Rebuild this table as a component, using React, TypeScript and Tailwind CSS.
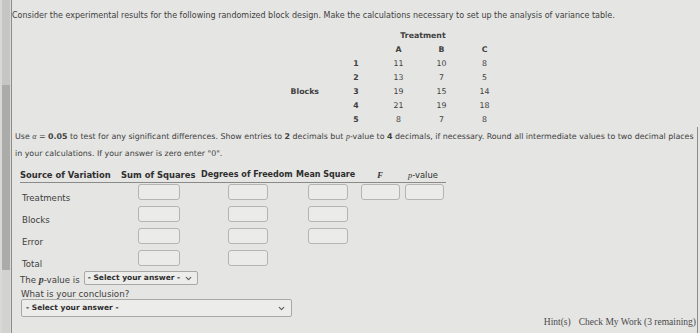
import React from 'react';
import { ChevronDown } from 'lucide-react';

// Treatment data per block
const rows = [
  { block: 1, a: 11, b: 10, c: 8 },
  { block: 2, a: 13, b: 7, c: 5 },
  { block: 3, a: 19, b: 15, c: 14 },
  { block: 4, a: 21, b: 19, c: 18 },
  { block: 5, a: 8, b: 7, c: 8 },
];

const Box = ({ w }: { w: string }) => (
  <div className={`${w} h-[16px] mt-[1px] rounded-[3px] border border-[#b4b4b2] bg-[#ebebe9]`} />
);

const Italic = ({ children }: { children: React.ReactNode }) => (
  <span className="font-['Liberation_Serif'] italic">{children}</span>
);

const App: React.FC = () => {
  const sources = [
    { label: 'Treatments', ss: true, df: true, ms: true, f: true },
    { label: 'Blocks', ss: true, df: true, ms: true, f: false },
    { label: 'Error', ss: true, df: true, ms: true, f: false },
    { label: 'Total', ss: true, df: true, ms: false, f: false },
  ];

  return (
    <div className="w-[700px] h-[333px] bg-[#e5e5e3] flex overflow-hidden font-['DejaVu_Sans',sans-serif] text-[#404040]">
      {/* left frame strip */}
      <div className="w-[2px] bg-[#d8d8d6]" />
      <div className="w-[8px] flex flex-col">
        <div className="h-[85px] bg-[#c6c6c4]" />
        <div className="h-[185px] bg-[#ababa9]" />
        <div className="flex-1 bg-[#d2d2d0]" />
      </div>
      <div className="w-[1px] bg-[#dadad8]" />
      <div className="w-[1px] bg-[#8c8c8a]" />

      <div className="flex-1 flex flex-col">
        <p className="mt-[11px] text-[8px] leading-[10px] whitespace-nowrap">
          Consider the experimental results for the following randomized block design. Make the calculations necessary to set up the analysis of variance table.
        </p>

        {/* data table */}
        <div className="mt-[8px] ml-[248px] grid grid-cols-[75px_42px_43px_43px_43px] auto-rows-[14px] items-center text-[7.8px] leading-[10px]">
          <div />
          <div />
          <div className="col-span-2 font-bold text-center pl-[6px]">Treatment</div>
          <div />
          <div />
          <div />
          <div className="font-bold text-center">A</div>
          <div className="font-bold text-center">B</div>
          <div className="font-bold text-center">C</div>
          {rows.map((r) => (
            <React.Fragment key={r.block}>
              <div className="font-bold text-right pr-[16px]">{r.block === 3 ? 'Blocks' : ''}</div>
              <div className="font-bold text-center">{r.block}</div>
              <div className="text-center">{r.a}</div>
              <div className="text-center">{r.b}</div>
              <div className="text-center">{r.c}</div>
            </React.Fragment>
          ))}
        </div>

        <div className="flex-1 flex flex-col mr-[2px] border-r border-[#8e8e8c]">
          <p className="mt-[1px] ml-[3px] text-[7.9px] leading-[17px] whitespace-nowrap">
            Use <Italic>α</Italic> = <b>0.05</b> to test for any significant differences. Show entries to <b>2</b> decimals but <Italic>p</Italic>-value to <b>4</b> decimals, if necessary. Round all intermediate values to two decimal places
            <br />
            in your calculations. If your answer is zero enter "0".
          </p>

          {/* ANOVA table */}
          <div className="mt-[7px] ml-[8px] w-[426px] flex text-[8.4px] leading-[12px] font-bold text-[#2e2e2e] border-b border-[#8a8a88] whitespace-nowrap">
            <div className="w-[101px]">Source of Variation</div>
            <div className="w-[78px]">Sum of Squares</div>
            <div className="w-[97px] pl-[2px] text-[8.05px]">Degrees of Freedom</div>
            <div className="w-[62px] text-[8px]">Mean Square</div>
            <div className="w-[44px] text-center"><Italic>F</Italic></div>
            <div className="w-[44px] pl-[6px] font-normal"><Italic>p</Italic>-value</div>
          </div>

          {sources.map((s) => (
            <div key={s.label} className="h-[22px] ml-[8px] flex text-[8.6px] leading-[10px]">
              <div className="w-[101px] pt-[10px] pl-[2px]">{s.label}</div>
              <div className="w-[78px] pl-[17px]">{s.ss && <Box w="w-[42px]" />}</div>
              <div className="w-[97px] pl-[29px]">{s.df && <Box w="w-[40px]" />}</div>
              <div className="w-[62px] pl-[12px]">{s.ms && <Box w="w-[40px]" />}</div>
              <div className="w-[44px] pl-[3px]">{s.f && <Box w="w-[39px]" />}</div>
              <div className="w-[44px] pl-[3px]">{s.f && <Box w="w-[39px]" />}</div>
            </div>
          ))}

          <div className="ml-[8px] flex items-center text-[8.6px] leading-[10px]">
            <span className="mt-[4px]">
              The <span className="font-['Liberation_Serif'] italic font-bold text-[10px]">p</span>-value is
            </span>
            <div className="ml-[4px] w-[114px] h-[14px] flex items-center justify-between rounded-[2px] border border-[#a8a8a6] bg-[#ececea] pl-[3px] pr-[4px]">
              <span className="font-bold text-[7.5px] text-[#2e2e2e]">- Select your answer -</span>
              <ChevronDown size={9} strokeWidth={3} className="text-[#5a5a5a]" />
            </div>
          </div>

          <p className="mt-[4px] ml-[9px] text-[8.7px] leading-[10px]">What is your conclusion?</p>
          <div className="ml-[9px] w-[271px] h-[18px] flex items-center justify-between rounded-[2px] border border-[#a8a8a6] bg-[#ececea] pl-[4px] pr-[5px]">
            <span className="font-bold text-[7.5px] text-[#2e2e2e]">- Select your answer -</span>
            <ChevronDown size={9} strokeWidth={3} className="text-[#5a5a5a]" />
          </div>

          <div className="mt-auto mb-[5px] flex justify-end pr-[1px] gap-[8px] font-['Liberation_Serif',serif] text-[9.5px] leading-[11px] text-[#4a4a4a]">
            <span>Hint(s)</span>
            <span>Check My Work (3 remaining)</span>
          </div>
        </div>
      </div>
    </div>
  );
};

export default App;
